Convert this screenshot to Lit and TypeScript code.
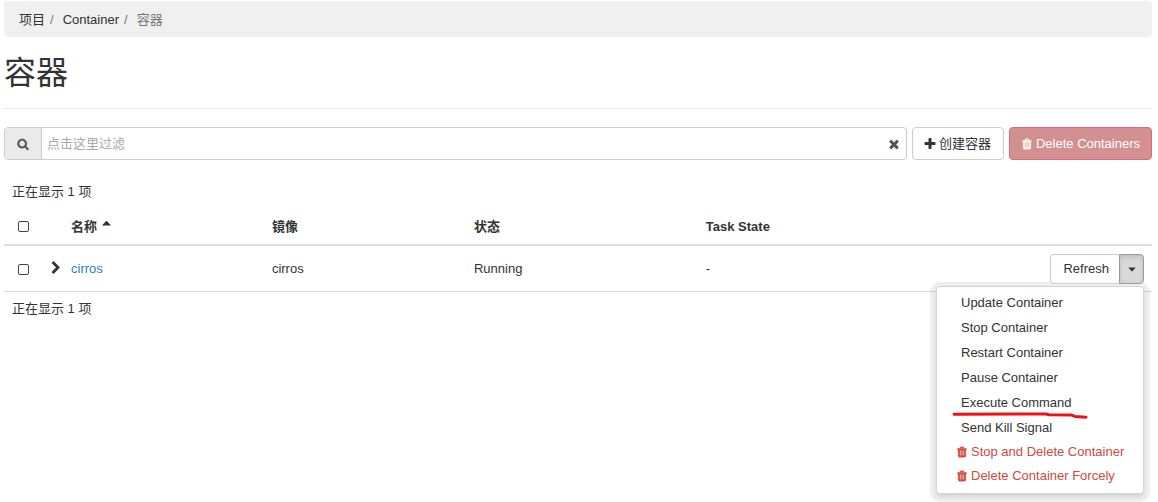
import { LitElement, html, css, svg } from "lit";
import { customElement, property, state } from "lit/decorators.js";
import { classMap } from "lit/directives/class-map.js";

const ICONS: Record<string, string> = {
  search:
    "M1216 832q0-185-131.5-316.5t-316.5-131.5-316.5 131.5-131.5 316.5 131.5 316.5 316.5 131.5 316.5-131.5 131.5-316.5zm512 832q0 52-38 90t-90 38q-54 0-90-38l-343-342q-179 124-399 124-143 0-273.5-55.5t-225-150-150-225-55.5-273.5 55.5-273.5 150-225 225-150 273.5-55.5 273.5 55.5 225 150 150 225 55.5 273.5q0 220-124 399l343 343q37 37 37 90z",
  trash:
    "M704 1376v-704q0-14-9-23t-23-9h-64q-14 0-23 9t-9 23v704q0 14 9 23t23 9h64q14 0 23-9t9-23zm256 0v-704q0-14-9-23t-23-9h-64q-14 0-23 9t-9 23v704q0 14 9 23t23 9h64q14 0 23-9t9-23zm256 0v-704q0-14-9-23t-23-9h-64q-14 0-23 9t-9 23v704q0 14 9 23t23 9h64q14 0 23-9t9-23zm-544-992h448l-48-117q-7-9-17-11h-317q-10 2-17 11zm928 32v64q0 14-9 23t-23 9h-96v948q0 83-47 143.5t-113 60.5h-832q-66 0-113-58.5t-47-141.5v-952h-96q-14 0-23-9t-9-23v-64q0-14 9-23t23-9h309l70-167q15-37 54-63t79-26h320q40 0 79 26t54 63l70 167h309q14 0 23 9t9 23z",
  times:
    "M1490 1322q0 40-28 68l-136 136q-28 28-68 28t-68-28l-294-294-294 294q-28 28-68 28t-68-28l-136-136q-28-28-28-68t28-68l294-294-294-294q-28-28-28-68t28-68l136-136q28-28 68-28t68 28l294 294 294-294q28-28 68-28t68 28l136 136q28 28 28 68t-28 68l-294 294 294 294q28 28 28 68z",
  plus:
    "M1600 736v192q0 40-28 68t-68 28h-416v416q0 40-28 68t-68 28h-192q-40 0-68-28t-28-68v-416h-416q-40 0-68-28t-28-68v-192q0-40 28-68t68-28h416v-416q0-40 28-68t68-28h192q40 0 68 28t28 68v416h416q40 0 68 28t28 68z",
  chevron:
    "M1619 877l-742 742q-19 19-45 19t-45-19l-166-166q-19-19-19-45t19-45l531-531-531-531q-19-19-19-45t19-45l166-166q19-19 45-19t45 19l742 742q19 19 19 45t-19 45z",
  up: "M1280 1088H128L628 540q76-64 152 0z",
  down: "M1344 736q0 20-19 39l-384 400q-45 40-90 0L467 775q-19-19-19-39t19-32 45-13h768q26 0 45 13t19 32z",
};

@customElement("ui-icon")
class UiIcon extends LitElement {
  @property() name = "";
  static styles = css`
    :host { display: inline-flex; width: 14px; height: 14px; flex: none; }
    svg { width: 100%; height: 100%; fill: currentColor; overflow: visible; }
    .search { stroke: currentColor; stroke-width: 60; }
    .trash { stroke: currentColor; stroke-width: 50; }
  `;
  render() {
    return html`<svg class=${this.name} viewBox="0 0 1792 1792" aria-hidden="true">
      ${svg`<path d=${ICONS[this.name] ?? ""}></path>`}
    </svg>`;
  }
}

interface Action { label: string; danger?: boolean; marked?: boolean }

const ACTIONS: Action[] = [
  { label: "Update Container" },
  { label: "Stop Container" },
  { label: "Restart Container" },
  { label: "Pause Container" },
  { label: "Execute Command", marked: true },
  { label: "Send Kill Signal" },
  { label: "Stop and Delete Container", danger: true },
  { label: "Delete Container Forcely", danger: true },
];

@customElement("app-root")
class AppRoot extends LitElement {
  @state() private open = true;

  static styles = css`
    :host {
      display: block;
      box-sizing: border-box;
      min-height: 100vh;
      padding: 1px 6px 0 4px;
      background: #fff;
      color: #333;
      font: 13px/20px "Liberation Sans", "Noto Sans CJK SC", sans-serif;
    }
    * { box-sizing: border-box; }
    a { color: inherit; text-decoration: none; }
    button, input { font: inherit; color: inherit; margin: 0; }
    button { cursor: pointer; }

    .breadcrumb {
      display: flex;
      margin: 0;
      padding: 9px 15px 7px;
      list-style: none;
      background: #f0f0f0;
      border-radius: 4px;
    }
    .breadcrumb li + li::before { content: "/"; padding: 0 9px 0 5px; color: #777; }
    .breadcrumb .current { color: #777; }

    h1 {
      margin: 0;
      padding: 14px 0 13px;
      font-size: 32px;
      line-height: 44px;
      font-weight: 400;
      border-bottom: 1px solid #e7e7e7;
    }

    .toolbar { display: flex; gap: 5px; margin-top: 18px; }
    .filter {
      display: flex;
      flex: 1;
      height: 33px;
      border: 1px solid #ccc;
      border-radius: 4px;
      overflow: hidden;
    }
    .filter label {
      display: flex;
      align-items: center;
      justify-content: center;
      width: 37px;
      background: #eaeaea;
      border-right: 1px solid #ccc;
      color: #555;
    }
    .filter ui-icon { width: 12px; height: 12px; }
    .filter .clear ui-icon { width: 14px; height: 14px; }
    .filter input {
      flex: 1;
      min-width: 0;
      padding: 0 5px;
      border: 0;
      outline: 0;
      background: #fff;
    }
    .filter input::placeholder { color: #aaa; opacity: 1; }
    .clear {
      display: flex;
      align-items: center;
      padding: 0 5px;
      border: 0;
      background: none;
      color: #555;
    }
    .btn {
      display: inline-flex;
      align-items: center;
      gap: 2px;
      height: 33px;
      padding: 0 12px 0 10px;
      border: 1px solid #ccc;
      border-radius: 4px;
      background: #fff;
      white-space: nowrap;
    }
    .btn-danger {
      gap: 3px;
      padding: 0 11px;
      background: #d39093;
      border-color: #e0677a;
      color: #fff;
    }
    .btn-danger ui-icon, .danger ui-icon { width: 12px; height: 12px; }
    .btn-danger ui-icon { color: #fff8e6; }

    .count { margin: 0; padding: 0 8px; }
    .count.top { padding-top: 22px; padding-bottom: 4px; }
    .count.bottom { padding-top: 7px; }

    table { width: 100%; border-collapse: collapse; table-layout: fixed; }
    th, td { padding: 0 8px; text-align: left; vertical-align: middle; }
    th { height: 39px; padding-top: 3px; border-bottom: 2px solid #ddd; }
    td { height: 46px; padding-top: 2px; border-bottom: 1px solid #ddd; }
    .c-check { width: 43px; }
    .c-expand { width: 16px; }
    .c-name { width: 17.5%; }
    .c-image { width: 17.6%; }
    .c-status { width: 20.2%; }
    .check { padding: 2px 0 0 14px; }
    .expand { padding: 0; }
    .expand ui-icon { display: flex; }
    .check input {
      display: block;
      appearance: none;
      width: 11px;
      height: 11px;
      margin: 0;
      border: 1px solid #444;
      border-radius: 2px;
      background: #fff;
    }
    .check input:checked { background: #444; }
    .link { color: #2a82ba; }
    td.actions { text-align: right; }

    .split { position: relative; display: inline-flex; vertical-align: middle; }
    .split > button {
      position: relative;
      z-index: 2;
      height: 30px;
      border: 1px solid #ccc;
      background: #fff;
    }
    .split .main { padding: 0 10px 0 12px; border-right: 0; border-radius: 4px 0 0 4px; }
    .split .caret {
      display: flex;
      align-items: center;
      justify-content: center;
      width: 25px;
      padding: 0;
      border-radius: 0 4px 4px 0;
    }
    .split .caret.open {
      background: #d8d8d8;
      border-color: #999;
      box-shadow: inset 0 2px 4px rgba(0, 0, 0, 0.12);
    }
    .menu {
      position: absolute;
      z-index: 1;
      top: 100%;
      right: 0;
      width: 208px;
      margin: 2px 0 0;
      padding: 3px 0 5px;
      list-style: none;
      text-align: left;
      background: #fff;
      border: 1px solid #d4d4d4;
      border-radius: 4px;
      box-shadow: 0 3px 5px rgba(0, 0, 0, 0.12), 0 2px 0 6px rgba(0, 0, 0, 0.06);
    }
    .menu li { position: relative; }
    .menu button {
      display: flex;
      align-items: center;
      width: 100%;
      height: 25px;
      padding: 0 24px;
      border: 0;
      background: none;
      white-space: nowrap;
    }
    .menu .danger { gap: 3px; height: 24px; padding: 0 19px; color: #d0493b; }
    .mark {
      position: absolute;
      left: 15px;
      top: 21px;
      width: 136px;
      height: 8px;
      fill: none;
      stroke: #ee1118;
      stroke-width: 3;
      stroke-linecap: round;
      stroke-linejoin: round;
      pointer-events: none;
    }
  `;

  private toggle() {
    this.open = !this.open;
  }

  private renderMenu() {
    return html`<ul class="menu">
      ${ACTIONS.map(
        (a) => html`<li>
          <button type="button" class=${classMap({ danger: !!a.danger })}>
            ${a.danger ? html`<ui-icon name="trash"></ui-icon>` : ""}${a.label}
          </button>
          ${a.marked
            ? html`<svg class="mark" viewBox="0 0 136 8" aria-hidden="true">
                <path d="M2 3.2L94 3L97 3.8L119 3.9L123 5.4L134 6.2"></path>
              </svg>`
            : ""}
        </li>`
      )}
    </ul>`;
  }

  render() {
    return html`
      <nav aria-label="breadcrumb">
        <ol class="breadcrumb">
          <li><a href="#">项目</a></li>
          <li><a href="#">Container</a></li>
          <li class="current">容器</li>
        </ol>
      </nav>
      <h1>容器</h1>
      <div class="toolbar">
        <div class="filter">
          <label for="filter" aria-label="点击这里过滤"><ui-icon name="search"></ui-icon></label>
          <input id="filter" type="text" placeholder="点击这里过滤" />
          <button class="clear" type="button" aria-label="×"><ui-icon name="times"></ui-icon></button>
        </div>
        <button class="btn" type="button"><ui-icon name="plus"></ui-icon>创建容器</button>
        <button class="btn btn-danger" type="button"><ui-icon name="trash"></ui-icon>Delete Containers</button>
      </div>
      <p class="count top">正在显示 1 项</p>
      <table>
        <colgroup>
          <col class="c-check" /><col class="c-expand" /><col class="c-name" />
          <col class="c-image" /><col class="c-status" /><col /><col />
        </colgroup>
        <thead>
          <tr>
            <th class="check"><input type="checkbox" aria-label="all" /></th>
            <th class="expand"></th>
            <th>名称 <ui-icon name="up"></ui-icon></th>
            <th>镜像</th>
            <th>状态</th>
            <th>Task State</th>
            <th></th>
          </tr>
        </thead>
        <tbody>
          <tr>
            <td class="check"><input type="checkbox" aria-label="cirros" /></td>
            <td class="expand"><ui-icon name="chevron"></ui-icon></td>
            <td><a class="link" href="#">cirros</a></td>
            <td>cirros</td>
            <td>Running</td>
            <td>-</td>
            <td class="actions">
              <div class="split">
                <button class="main" type="button">Refresh</button>
                <button
                  class=${classMap({ caret: true, open: this.open })}
                  type="button"
                  aria-label="menu"
                  aria-expanded=${this.open}
                  @click=${this.toggle}
                ><ui-icon name="down"></ui-icon></button>
                ${this.open ? this.renderMenu() : ""}
              </div>
            </td>
          </tr>
        </tbody>
      </table>
      <p class="count bottom">正在显示 1 项</p>
    `;
  }
}
